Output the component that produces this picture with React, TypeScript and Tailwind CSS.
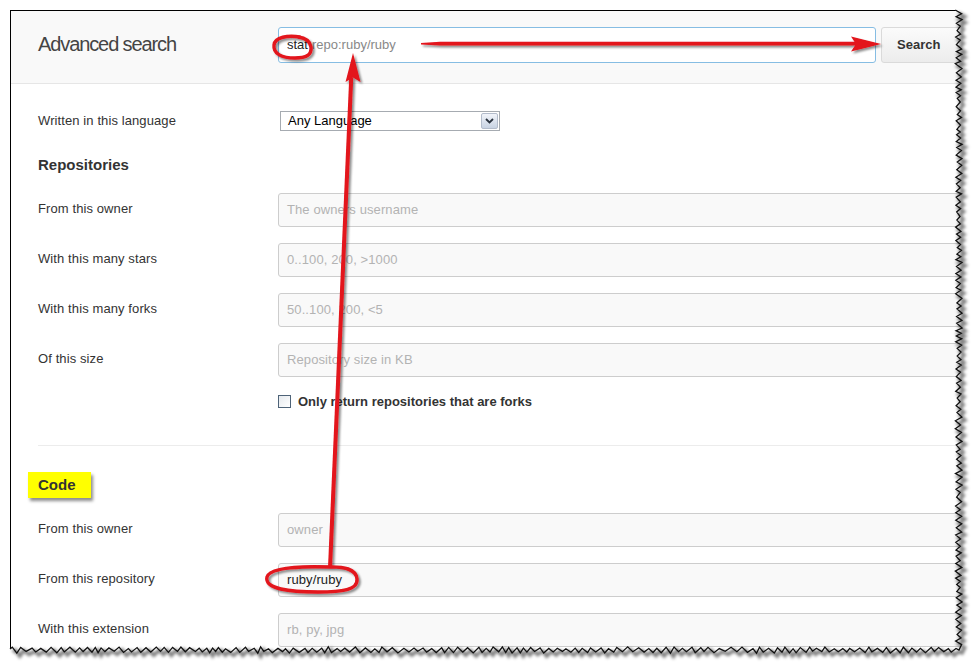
import type { ReactNode } from 'react'

// seeded rng so the torn edge is the same on every render
function makeRng(seed: number) {
  let s = seed
  return () => {
    s = (s * 16807) % 2147483647
    return s / 2147483647
  }
}

function tornEdge() {
  const r = makeRng(42)
  const pts: [number, number][] = []
  let y = 10
  let i = 0
  while (y < 648) {
    pts.push([958.5 + (i % 2 ? 2.6 : -2.2) + (r() - 0.5) * 2, y])
    y += 2.4 + r() * 2.4
    i++
  }
  pts.push([959, 650])
  let x = 956
  i = 0
  while (x > 11) {
    pts.push([x, 650 + (i % 2 ? 2.2 : -2.2) + (r() - 0.5) * 2])
    x -= 2.8 + r() * 3.2
    i++
  }
  pts.push([10, 649])
  return pts
}

const EDGE = tornEdge()
const EDGE_STR = EDGE.map(([x, y]) => `${x.toFixed(1)},${y.toFixed(1)}`).join(' ')

function FrameEdge() {
  const cover = `M 980 0 L 962 0 L ${EDGE_STR.split(' ').join(' L ')} L 9 669 L 980 669 Z`
  return (
    <svg className="pointer-events-none absolute left-0 top-0" width="980" height="669">
      <defs>
        <filter id="edgeBlur" x="-5%" y="-5%" width="110%" height="110%">
          <feGaussianBlur stdDeviation="1.6" />
        </filter>
      </defs>
      <path d={cover} fill="#fff" />
      <polyline
        points={EDGE_STR}
        transform="translate(3 3)"
        fill="none"
        stroke="#000"
        strokeOpacity="0.5"
        strokeWidth="3.5"
        filter="url(#edgeBlur)"
      />
      <polyline points={EDGE_STR} fill="none" stroke="#111" strokeWidth="1.3" />
    </svg>
  )
}

function Annotations() {
  const red = '#e3131b'
  return (
    <svg className="pointer-events-none absolute left-0 top-0" width="980" height="669">
      <defs>
        <filter id="redShadow" x="-10%" y="-10%" width="120%" height="120%">
          <feDropShadow dx="2" dy="2" stdDeviation="1.2" floodColor="#000" floodOpacity="0.45" />
        </filter>
      </defs>
      <g filter="url(#redShadow)">
        {/* loop round "stat" */}
        <path
          d="M 300 37 C 288 35 275 37 274 45 C 273 54 282 58 295 58 C 306 58 312 55 311 47 C 310 41 306 38 298 37"
          fill="none"
          stroke={red}
          strokeWidth="3.4"
          strokeLinecap="round"
        />
        {/* arrow to the Search button */}
        <polygon points="421,43 440,41.8 858,41.8 858,45.6 440,45.6 421,44.5" fill={red} />
        <polygon points="851,36.5 881,44 851,51.5 856,44" fill={red} />
        {/* arrow up from the repository field */}
        <polygon points="328,568 332,568 353.2,78 349.2,78" fill={red} />
        <polygon points="353,53 360.5,82 353,77.5 345.5,82" fill={red} />
        {/* loop round "ruby/ruby" */}
        <path
          d="M 331 567 C 305 566 270 567 267 577 C 264 589 290 592 318 592 C 342 592 358 590 357 579 C 356 569 345 566 325 567"
          fill="none"
          stroke={red}
          strokeWidth="3.4"
          strokeLinecap="round"
        />
      </g>
    </svg>
  )
}

function Field({ label, placeholder, value }: { label: string; placeholder?: string; value?: string }) {
  return (
    <div className="flex h-[34px]">
      <div className="w-[240px] shrink-0 pt-[8px] text-[13px] leading-[15px] tracking-[0.1px] text-[#333]">
        {label}
      </div>
      <div className="flex h-[34px] w-[720px] shrink-0 items-center rounded-[3px] border border-[#cdcdcd] bg-[#f9f9f9] pl-[8px] text-[13px] tracking-[0.1px]">
        {value ? <span className="text-[#222]">{value}</span> : <span className="text-[#b3b3b3]">{placeholder}</span>}
      </div>
    </div>
  )
}

function Heading({ children }: { children: ReactNode }) {
  return <div className="h-[20px] text-[15px] font-bold leading-[20px] text-[#333]">{children}</div>
}

export default function App() {
  return (
    <div className="relative h-[669px] w-[980px] overflow-hidden bg-white font-['Liberation_Sans',Arial,sans-serif]">
      <div className="ml-[10px] mt-[10px] h-[652px] w-[952px] overflow-hidden border-l border-t border-black bg-white">
        <div className="flex h-[73px] items-start border-b border-[#e6e6e6] bg-[#f9f9f9] pl-[27px] pt-[16px]">
          <div className="flex h-[34px] w-[240px] shrink-0 items-center text-[20px] tracking-[-1.1px] text-[#444]">
            Advanced search
          </div>
          <div className="flex h-[36px] w-[598px] shrink-0 items-center rounded-[3px] border border-[#86bde3] bg-white pl-[8px] text-[13px]">
            <span className="text-[#222]">stat</span>
            <span className="ml-[4px] text-[#888]">repo:ruby/ruby</span>
          </div>
          <button
            type="button"
            className="ml-[5px] flex h-[36px] w-[90px] shrink-0 items-center rounded-[3px] border border-[#dadada] bg-gradient-to-b from-[#fbfbfb] to-[#ececec] pl-[15px] text-[13px] font-bold text-[#333]"
          >
            Search
          </button>
        </div>

        <div className="pl-[27px] pt-[26px]">
          <div className="flex h-[21px] items-center">
            <div className="w-[240px] shrink-0 pt-[1px] text-[13px] tracking-[0.1px] text-[#333]">
              Written in this language
            </div>
            <div className="ml-[2px] flex h-[20px] w-[220px] items-center justify-between border border-[#a6abb1] bg-white pl-[7px] pr-[1px] text-[13px] text-black">
              <span>Any Language</span>
              <span className="flex h-[16px] w-[17px] items-center justify-center rounded-[2px] border border-[#b3bccb] bg-gradient-to-b from-[#f1f4fa] to-[#c8d3e3]">
                <svg width="9" height="6" viewBox="0 0 9 6">
                  <path d="M1 1 L4.5 4.5 L8 1" fill="none" stroke="#2b3440" strokeWidth="1.8" />
                </svg>
              </span>
            </div>
          </div>

          <div className="mt-[24px]">
            <Heading>Repositories</Heading>
          </div>
          <div className="mt-[18px] flex flex-col gap-[16px]">
            <Field label="From this owner" placeholder="The owners username" />
            <Field label="With this many stars" placeholder="0..100, 200, >1000" />
            <Field label="With this many forks" placeholder="50..100, 200, <5" />
            <Field label="Of this size" placeholder="Repository size in KB" />
          </div>
          <div className="ml-[240px] mt-[18px] flex h-[13px] items-center gap-[7px]">
            <span className="h-[13px] w-[13px] border border-[#4e6378] bg-gradient-to-br from-[#e6eaee] to-white" />
            <span className="text-[13px] font-bold text-[#333]">Only return repositories that are forks</span>
          </div>

          <div className="mt-[37px] border-t border-[#ececec]" />

          <div className="-ml-[10px] mt-[26px] flex h-[26px] w-fit items-center bg-[#ffff00] pl-[10px] pr-[15px] text-[15px] font-bold text-[#333] shadow-[2px_3px_3px_rgba(0,0,0,0.45)]">
            Code
          </div>
          <div className="mt-[15px] flex flex-col gap-[16px]">
            <Field label="From this owner" placeholder="owner" />
            <Field label="From this repository" value="ruby/ruby" />
            <Field label="With this extension" placeholder="rb, py, jpg" />
          </div>
        </div>
      </div>

      <FrameEdge />
      <Annotations />
    </div>
  )
}
